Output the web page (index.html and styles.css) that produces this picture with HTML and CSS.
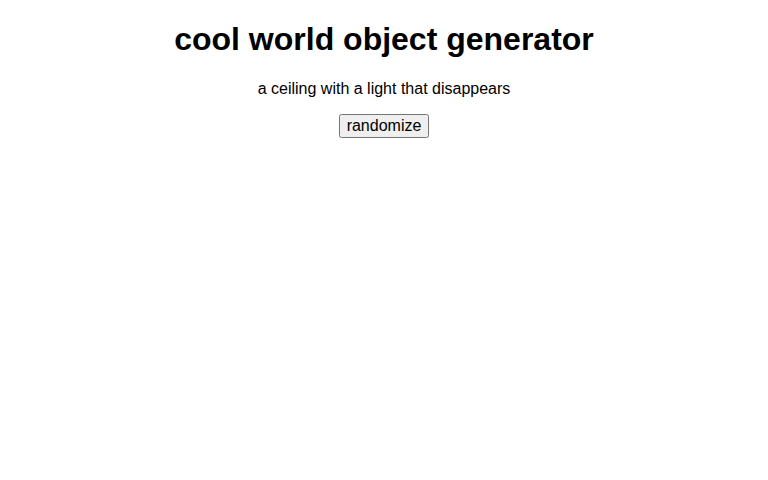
FILE: index.html
```html
<!DOCTYPE html>
<html lang="en">
<head>
    <meta charset="UTF-8">
    <meta name="viewport" content="width=device-width, initial-scale=1.0">
    <title>cool world object generator</title>
    <link rel="stylesheet" href="styles.css">
</head>
<body>

    <h1>cool world object generator</h1>

    <p id="object">a ceiling with a light that disappears</p>

    <button class="randomize" onclick="randomize()">randomize</button>

    <script src="script.js"></script>

</body>
</html>
```

FILE: styles.css
```css
body { font-family: "Liberation Sans", Arial, sans-serif; text-align: center; margin: 0; }
h1 { font-size: 32px; margin: 21px 0 22px; }
.randomize { font-family: "Liberation Sans", Arial, sans-serif; font-size: 16px; }
```

FILE: script.js
```js
// pieces to build a random object from
const things = ['a ceiling', 'a door', 'a window', 'a staircase', 'a chair'];
const withs = ['a light', 'a handle', 'a cat', 'a shadow', 'a clock'];
const endings = ['disappears', 'hums quietly', 'never closes', 'moves at night', 'glows'];

function pick(list) {
    return list[Math.floor(Math.random() * list.length)];
}

function randomize() {
    document.getElementById('object').textContent =
        pick(things) + ' with ' + pick(withs) + ' that ' + pick(endings);
}
```
